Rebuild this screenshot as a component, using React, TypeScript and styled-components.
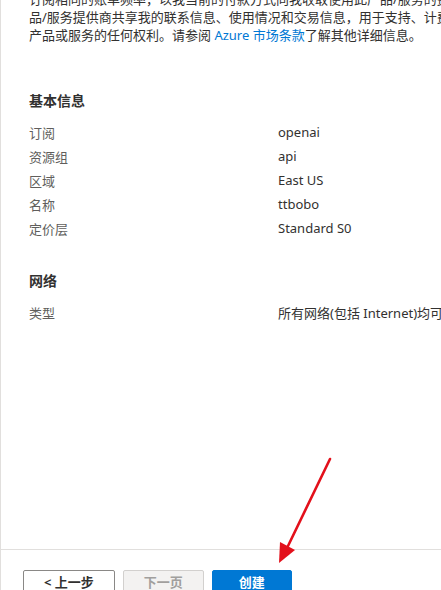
import React from "react";
import styled, { createGlobalStyle } from "styled-components";

const Global = createGlobalStyle`
  html, body { margin: 0; padding: 0; background: #ffffff; }
  body { font-family: "Noto Sans", "Noto Sans CJK SC", sans-serif; color: #323130; }
`;

const Panel = styled.div`
  position: relative;
  width: 441px;
  height: 590px;
  box-sizing: border-box;
  border-left: 1px solid #e1dfdd;
  overflow: hidden;
  display: grid;
  grid-template-rows: 549px 1fr;
  background: #fff;
`;

const Main = styled.div`
  overflow: hidden;
  padding-left: 28px;
`;

const Scroll = styled.div`
  display: flex;
  flex-direction: column;
  margin-top: -10px;
  width: 620px;
`;

const Paragraph = styled.p`
  margin: 0 0 16px;
  font-size: 13px;
  line-height: 18px;
  white-space: nowrap;
  color: #323130;
`;

const Link = styled.a`
  color: #0078d4;
  text-decoration: none;
`;

const Section = styled.section`
  margin-top: 31px;
`;

const Heading = styled.h3`
  margin: 0 0 9px;
  font-size: 14px;
  line-height: 20px;
  font-weight: 700;
  color: #323130;
`;

const Row = styled.div`
  display: grid;
  grid-template-columns: 249px 1fr;
  height: 24px;
  align-items: center;
  font-size: 13px;
  white-space: nowrap;
`;

const Label = styled.span`
  color: #605e5c;
`;

const Value = styled.span`
  color: #323130;
`;

const Footer = styled.div`
  border-top: 1px solid #e1dfdd;
  padding: 20px 0 0 22px;
  display: flex;
  gap: 8px;
  align-items: flex-start;
`;

type Variant = "default" | "disabled" | "primary";

const Button = styled.button<{ $variant: Variant }>`
  box-sizing: border-box;
  height: 24px;
  min-width: 80px;
  padding: 0 20px;
  border-radius: 2px;
  font-family: inherit;
  font-size: 13px;
  font-weight: 700;
  line-height: 22px;
  cursor: pointer;
  border: 1px solid
    ${(p) => (p.$variant === "primary" ? "#0078d4" : p.$variant === "disabled" ? "#d2d0ce" : "#8a8886")};
  background: ${(p) => (p.$variant === "primary" ? "#0078d4" : p.$variant === "disabled" ? "#f3f2f1" : "#ffffff")};
  color: ${(p) => (p.$variant === "primary" ? "#ffffff" : p.$variant === "disabled" ? "#a19f9d" : "#323130")};
`;

const ArrowLayer = styled.svg`
  position: absolute;
  left: 0;
  top: 0;
  width: 441px;
  height: 590px;
  pointer-events: none;
`;

const basics: [string, string][] = [
  ["订阅", "openai"],
  ["资源组", "api"],
  ["区域", "East US"],
  ["名称", "ttbobo"],
  ["定价层", "Standard S0"],
];

export default function App() {
  return (
    <>
      <Global />
      <Panel>
        <Main>
          <Scroll>
            <Paragraph>
              订阅相同的账单频率，以我当前的付款方式向我收取使用此产品/服务的费用；以及 (c) 同意 Microsoft 可以与产
              <br />
              品/服务提供商共享我的联系信息、使用情况和交易信息，用于支持、计费和其他交易活动。Microsoft 不提供第三方
              <br />
              产品或服务的任何权利。请参阅 <Link href="#">Azure 市场条款</Link>了解其他详细信息。
            </Paragraph>
            <Section>
              <Heading>基本信息</Heading>
              {basics.map(([k, v]) => (
                <Row key={k}>
                  <Label>{k}</Label>
                  <Value>{v}</Value>
                </Row>
              ))}
            </Section>
            <Section>
              <Heading>网络</Heading>
              <Row>
                <Label>类型</Label>
                <Value>所有网络(包括 Internet)均可访问此资源。</Value>
              </Row>
            </Section>
          </Scroll>
        </Main>
        <Footer>
          <Button $variant="default">&lt; 上一步</Button>
          <Button $variant="disabled" disabled>
            下一页
          </Button>
          <Button $variant="primary">创建</Button>
        </Footer>
        <ArrowLayer viewBox="0 0 441 590">
          <line x1="329" y1="459" x2="287" y2="546" stroke="#e3101b" strokeWidth="2.6" strokeLinecap="round" />
          <polygon points="278,563 294,550 279,542" fill="#e3101b" />
        </ArrowLayer>
      </Panel>
    </>
  );
}
